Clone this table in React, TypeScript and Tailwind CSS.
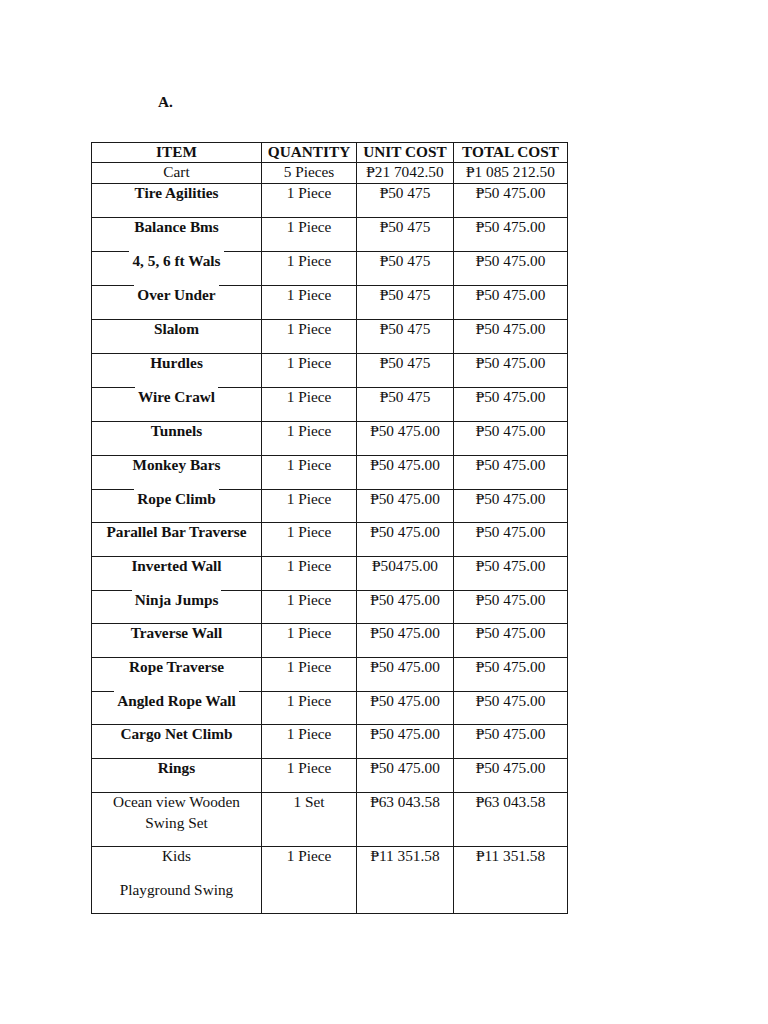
import React from "react";

type Row = {
  item: string[];
  qty: string;
  unit: string;
  total: string;
  h: string;
  bold?: boolean;
  cut?: boolean;
};

const rows: Row[] = [
  { item: ["Cart"], qty: "5 Pieces", unit: "₱21 7042.50", total: "₱1 085 212.50", h: "h-[21px]" },
  { item: ["Tire Agilities"], qty: "1 Piece", unit: "₱50 475", total: "₱50 475.00", h: "h-[34px]", bold: true },
  { item: ["Balance Bms"], qty: "1 Piece", unit: "₱50 475", total: "₱50 475.00", h: "h-[34px]", bold: true },
  { item: ["4, 5, 6 ft Wals"], qty: "1 Piece", unit: "₱50 475", total: "₱50 475.00", h: "h-[34px]", bold: true, cut: true },
  { item: ["Over Under"], qty: "1 Piece", unit: "₱50 475", total: "₱50 475.00", h: "h-[34px]", bold: true, cut: true },
  { item: ["Slalom"], qty: "1 Piece", unit: "₱50 475", total: "₱50 475.00", h: "h-[34px]", bold: true },
  { item: ["Hurdles"], qty: "1 Piece", unit: "₱50 475", total: "₱50 475.00", h: "h-[34px]", bold: true },
  { item: ["Wire Crawl"], qty: "1 Piece", unit: "₱50 475", total: "₱50 475.00", h: "h-[34px]", bold: true, cut: true },
  { item: ["Tunnels"], qty: "1 Piece", unit: "₱50 475.00", total: "₱50 475.00", h: "h-[34px]", bold: true },
  { item: ["Monkey Bars"], qty: "1 Piece", unit: "₱50 475.00", total: "₱50 475.00", h: "h-[34px]", bold: true },
  { item: ["Rope Climb"], qty: "1 Piece", unit: "₱50 475.00", total: "₱50 475.00", h: "h-[33px]", bold: true, cut: true },
  { item: ["Parallel Bar Traverse"], qty: "1 Piece", unit: "₱50 475.00", total: "₱50 475.00", h: "h-[34px]", bold: true },
  { item: ["Inverted Wall"], qty: "1 Piece", unit: "₱50475.00", total: "₱50 475.00", h: "h-[34px]", bold: true },
  { item: ["Ninja Jumps"], qty: "1 Piece", unit: "₱50 475.00", total: "₱50 475.00", h: "h-[33px]", bold: true, cut: true },
  { item: ["Traverse Wall"], qty: "1 Piece", unit: "₱50 475.00", total: "₱50 475.00", h: "h-[34px]", bold: true },
  { item: ["Rope Traverse"], qty: "1 Piece", unit: "₱50 475.00", total: "₱50 475.00", h: "h-[34px]", bold: true },
  { item: ["Angled Rope Wall"], qty: "1 Piece", unit: "₱50 475.00", total: "₱50 475.00", h: "h-[33px]", bold: true, cut: true },
  { item: ["Cargo Net Climb"], qty: "1 Piece", unit: "₱50 475.00", total: "₱50 475.00", h: "h-[34px]", bold: true },
  { item: ["Rings"], qty: "1 Piece", unit: "₱50 475.00", total: "₱50 475.00", h: "h-[34px]", bold: true },
];

const cell = "border-r border-b border-[#1a1a1a] text-center leading-[17px]";

export default function App() {
  return (
    <div className="min-h-[1024px] w-[768px] bg-white text-[15.3px] leading-[17px] text-[#111] font-['Liberation_Serif',serif]">
      <div className="pl-[158px] pt-[93px] font-bold">A.</div>

      <div className="ml-[91px] mt-[32px] grid w-[477px] grid-cols-[170px_95px_97px_114px] border-l border-t border-[#1a1a1a]">
        {/* header */}
        {["ITEM", "QUANTITY", "UNIT COST", "TOTAL COST"].map((h) => (
          <div key={h} className={`${cell} h-[20px] font-bold`}>
            {h}
          </div>
        ))}

        {rows.map((r) => (
          <React.Fragment key={r.item.join(" ")}>
            <div className={`${cell} ${r.h} flex flex-col items-center ${r.bold ? "font-bold" : ""}`}>
              {r.cut ? (
                <span className="-mt-[2px] block bg-white px-[3px] pt-[2px]">{r.item[0]}</span>
              ) : (
                <span>{r.item[0]}</span>
              )}
            </div>
            <div className={`${cell} ${r.h}`}>{r.qty}</div>
            <div className={`${cell} ${r.h}`}>{r.unit}</div>
            <div className={`${cell} ${r.h}`}>{r.total}</div>
          </React.Fragment>
        ))}

        {/* multi-line rows */}
        <div className={`${cell} h-[54px] flex flex-col items-center gap-[4px]`}>
          <span>Ocean view Wooden</span>
          <span>Swing Set</span>
        </div>
        <div className={`${cell} h-[54px]`}>1 Set</div>
        <div className={`${cell} h-[54px]`}>₱63 043.58</div>
        <div className={`${cell} h-[54px]`}>₱63 043.58</div>

        <div className={`${cell} h-[67px] flex flex-col items-center gap-[17px]`}>
          <span>Kids</span>
          <span>Playground Swing</span>
        </div>
        <div className={`${cell} h-[67px]`}>1 Piece</div>
        <div className={`${cell} h-[67px]`}>₱11 351.58</div>
        <div className={`${cell} h-[67px]`}>₱11 351.58</div>
      </div>
    </div>
  );
}
